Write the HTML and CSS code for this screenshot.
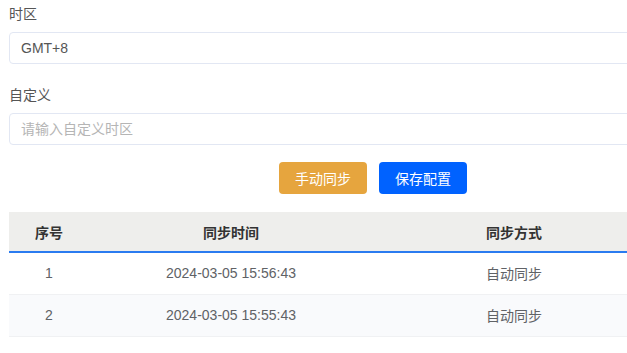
FILE: index.html
```html
<!DOCTYPE html>
<html lang="zh-CN">
<head>
  <meta charset="UTF-8">
  <meta name="viewport" content="width=device-width, initial-scale=1.0">
  <title>时间同步</title>
  <link rel="stylesheet" href="styles.css">
</head>
<body>
  <div class="page">
    <div class="form-item">
      <label class="form-label">时区</label>
      <input class="form-input" type="text" value="GMT+8">
    </div>
    <div class="form-item">
      <label class="form-label">自定义</label>
      <input class="form-input" type="text" placeholder="请输入自定义时区">
    </div>
    <div class="actions">
      <button class="btn btn-warning">手动同步</button>
      <button class="btn btn-primary">保存配置</button>
    </div>
    <table class="sync-table">
      <thead>
        <tr>
          <th class="col-index">序号</th>
          <th class="col-time">同步时间</th>
          <th class="col-mode">同步方式</th>
        </tr>
      </thead>
      <tbody>
        <tr>
          <td>1</td>
          <td>2024-03-05 15:56:43</td>
          <td>自动同步</td>
        </tr>
        <tr>
          <td>2</td>
          <td>2024-03-05 15:55:43</td>
          <td>自动同步</td>
        </tr>
      </tbody>
    </table>
  </div>
</body>
</html>
```

FILE: styles.css
```css
* {
  margin: 0;
  padding: 0;
  box-sizing: border-box;
}
body {
  background: #fff;
  font-family: "Liberation Sans", "Noto Sans CJK SC", sans-serif;
  font-size: 14px;
  color: #555;
  overflow: hidden;
}
.page {
  width: 728px;
  margin-left: 9px;
  padding-top: 4px;
}
.form-item {
  display: flex;
  flex-direction: column;
  margin-bottom: 17px;
}
.form-item:first-child {
  margin-bottom: 21px;
}
.form-label {
  font-size: 14px;
  line-height: 20px;
  color: #555;
  margin-bottom: 8px;
}
.form-input {
  height: 32px;
  width: 100%;
  border: 1px solid #e2e7f3;
  border-radius: 4px;
  padding: 0 11px;
  font-family: inherit;
  font-size: 14px;
  color: #555;
  outline: none;
}
.form-input::placeholder {
  color: #b5b5b5;
}
.actions {
  display: flex;
  justify-content: center;
  gap: 12px;
  margin-bottom: 18px;
}
.btn {
  width: 88px;
  height: 32px;
  border: none;
  border-radius: 4px;
  color: #fff;
  font-family: inherit;
  font-size: 14px;
  cursor: pointer;
}
.btn-warning {
  background: #e6a53e;
}
.btn-primary {
  background: #0062ff;
}
.sync-table {
  width: 646px;
  table-layout: fixed;
  border-collapse: collapse;
}
.sync-table th {
  height: 40px;
  background: #eeeeec;
  color: #333;
  font-weight: bold;
  font-size: 14px;
  border-bottom: 2px solid #2a7bf0;
}
.sync-table td {
  height: 42px;
  text-align: center;
  color: #606266;
  border-bottom: 1px solid #f0f1f3;
}
.sync-table tbody tr:nth-child(2) td {
  background: #f9fafc;
}
.col-index {
  width: 80px;
}
.col-time {
  width: 284px;
}
.col-mode {
  width: 282px;
}
```
